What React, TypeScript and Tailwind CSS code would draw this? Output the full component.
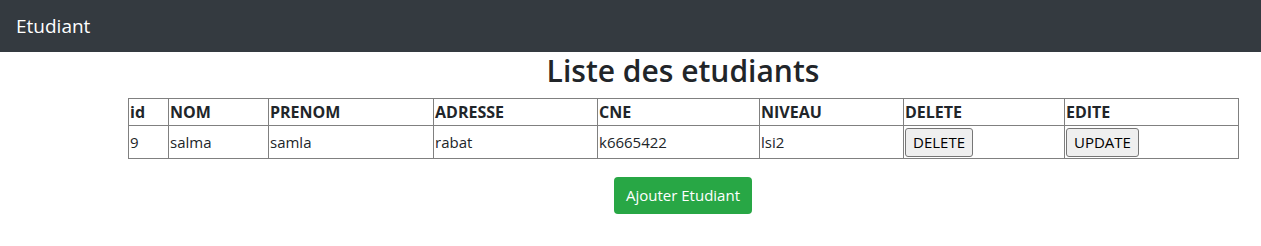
import React from "react";

const cols = [40, 100, 165, 164, 162, 144, 161, 174];
const heads = ["id", "NOM", "PRENOM", "ADRESSE", "CNE", "NIVEAU", "DELETE", "EDITE"];
const row = ["9", "salma", "samla", "rabat", "k6665422", "lsi2"];

export default function App() {
  return (
    <div className="min-h-[246px] bg-white text-[#212529]" style={{ fontFamily: '"Open Sans", "Noto Sans", sans-serif' }}>
      <nav className="h-[52px] bg-[#343a40] flex items-center px-4">
        <span className="text-white text-[19px] leading-none">Etudiant</span>
      </nav>
      <div className="ml-[128px] w-[1110px]">
        <h2 className="text-center text-[30px] font-semibold leading-[38px] h-[38px] mb-2">Liste des etudiants</h2>
        <table className="table-fixed w-[1110px] border-collapse border border-[#808080]">
          <colgroup>
            {cols.map((w, i) => (
              <col key={i} style={{ width: w }} />
            ))}
          </colgroup>
          <thead>
            <tr className="h-[27px]">
              {heads.map((h) => (
                <th key={h} className="border border-[#808080] text-left font-bold text-[16px] px-[1px] py-0 leading-[20px]">
                  {h}
                </th>
              ))}
            </tr>
          </thead>
          <tbody>
            <tr className="h-[33px]">
              {row.map((c, i) => (
                <td key={i} className="border border-[#808080] text-[15px] px-[1px] py-0 leading-[20px]">
                  {c}
                </td>
              ))}
              <td className="border border-[#808080] px-[1px] py-0">
                <button className="h-[29px] px-[7px] bg-[#efefef] border border-[#767676] rounded-[3px] text-[15px] text-black leading-none">
                  DELETE
                </button>
              </td>
              <td className="border border-[#808080] px-[1px] py-0">
                <button className="h-[29px] px-[7px] bg-[#efefef] border border-[#767676] rounded-[3px] text-[15px] text-black leading-none">
                  UPDATE
                </button>
              </td>
            </tr>
          </tbody>
        </table>
        <div className="flex justify-center mt-[18px]">
          <button className="h-[37px] px-3 bg-[#28a745] text-white text-[15px] rounded-[4px] leading-none">
            Ajouter Etudiant
          </button>
        </div>
      </div>
    </div>
  );
}
